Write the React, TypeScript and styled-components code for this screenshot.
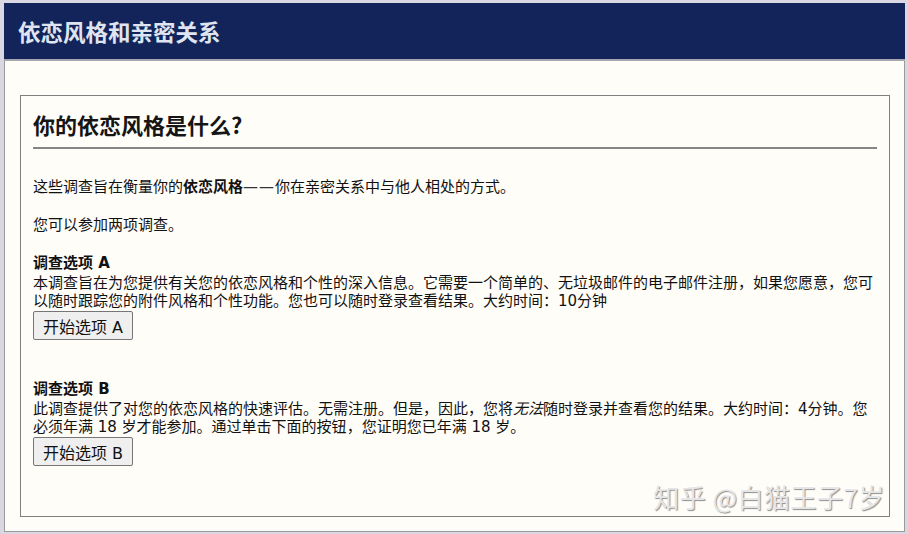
import styled, { createGlobalStyle } from "styled-components";

const GlobalStyle = createGlobalStyle`
  html, body {
    margin: 0;
    padding: 0;
    background: #d9d8e2;
  }
  body {
    font-family: "DejaVu Sans", "Noto Sans CJK SC", sans-serif;
    color: #111;
  }
`;

const options = [
  {
    label: "调查选项 A",
    button: "开始选项 A",
    text: (
      <>
        本调查旨在为您提供有关您的依恋风格和个性的深入信息。它需要一个简单的、无垃圾邮件的电子邮件注册，如果您愿意，您可以随时跟踪您的附件风格和个性功能。您也可以随时登录查看结果。大约时间：10分钟
      </>
    ),
  },
  {
    label: "调查选项 B",
    button: "开始选项 B",
    text: (
      <>
        此调查提供了对您的依恋风格的快速评估。无需注册。但是，因此，您将<em>无法</em>随时登录并查看您的结果。大约时间：4分钟。您必须年满 18 岁才能参加。通过单击下面的按钮，您证明您已年满 18 岁。
      </>
    ),
  },
];

const App = () => {
  return (
    <Page>
      <GlobalStyle />
      <Header>依恋风格和亲密关系</Header>
      <Content>
        <Card>
          <Heading>你的依恋风格是什么?</Heading>
          <Rule />
          <Intro>
            这些调查旨在衡量你的<strong>依恋风格</strong>
            <Dash>——</Dash>你在亲密关系中与他人相处的方式。
          </Intro>
          <Intro>您可以参加两项调查。</Intro>
          {options.map((opt, idx) => (
            <Option key={opt.label} $first={idx === 0}>
              <Label>{opt.label}</Label>
              <Desc>{opt.text}</Desc>
              <StartButton type="button">{opt.button}</StartButton>
            </Option>
          ))}
          <Watermark>知乎 @白猫王子7岁</Watermark>
        </Card>
      </Content>
    </Page>
  );
};

export default App;

const Page = styled.div`
  padding: 3px 3px 3px 4px;
  box-sizing: border-box;
  width: 908px;
`;

const Header = styled.div`
  height: 56px;
  background: #12245a;
  color: #dfe4f0;
  font-size: 22.5px;
  font-weight: bold;
  line-height: 56px;
  padding-left: 14px;
  border-bottom: 2px solid #a6a6ae;
  font-family: "Noto Sans CJK SC", sans-serif;
`;

const Content = styled.div`
  background: #fffdf8;
  border: 1px solid #9a9a9a;
  border-top: none;
  padding: 34px 14px 14px 15px;
`;

const Card = styled.div`
  position: relative;
  border: 1px solid #808080;
  padding: 12px 12px 48px;
  min-height: 360px;
`;

const Heading = styled.h2`
  margin: 0;
  font-size: 22px;
  line-height: 32px;
  font-weight: bold;
  color: #151515;
  font-family: "Noto Sans CJK SC", sans-serif;
`;

const Rule = styled.div`
  height: 2px;
  background: #858585;
  margin: 7px 0 29px;
`;

const Intro = styled.p`
  margin: 0 0 20px;
  font-size: 15px;
  line-height: 18px;
  strong {
    font-weight: bold;
  }
`;

const Dash = styled.span`
  letter-spacing: 1px;
  color: #333;
`;

const Option = styled.div<{ $first: boolean }>`
  margin-top: ${(p) => (p.$first ? "0" : "40px")};
`;

const Label = styled.div`
  font-size: 15px;
  line-height: 18px;
  font-weight: bold;
  margin-bottom: 2px;
`;

const Desc = styled.div`
  font-size: 15px;
  line-height: 18px;
  em {
    font-style: italic;
  }
`;

const StartButton = styled.button`
  display: block;
  margin-top: 1px;
  height: 29px;
  padding: 0 9px;
  font-family: "DejaVu Sans", "Noto Sans CJK SC", sans-serif;
  font-size: 16px;
  color: #111;
  background: #efefef;
  border: 1px solid #767676;
  border-radius: 2px;
`;

const Watermark = styled.div`
  position: absolute;
  right: 4px;
  bottom: 1px;
  font-size: 26px;
  font-family: "Noto Sans CJK SC", sans-serif;
  color: #e6e6e6;
  text-shadow: 1px 1px 1px #8f8f8f, -1px -1px 0 #ffffff;
  letter-spacing: 0.5px;
`;
